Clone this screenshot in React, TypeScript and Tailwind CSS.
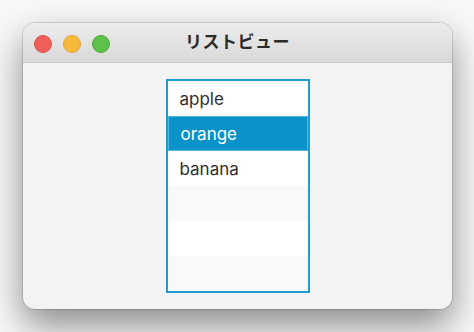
import React from "react";

const items = ["apple", "orange", "banana"];
const selected = 1;
const rowCount = 6;

function TrafficLights() {
  return (
    <div className="absolute left-[11px] top-[12px] flex items-center gap-[11px]">
      <span className="block h-[18px] w-[18px] rounded-full bg-[#ee5f58] border border-[#d9534c]" />
      <span className="block h-[18px] w-[18px] rounded-full bg-[#f8b93a] border border-[#e0a530]" />
      <span className="block h-[18px] w-[18px] rounded-full bg-[#5dc04a] border border-[#4ea83d]" />
    </div>
  );
}

export default function App() {
  const rows = Array.from({ length: rowCount }, (_, i) => items[i] ?? null);

  return (
    <div
      className="w-[474px] h-[332px] bg-[#f8f8f8] pt-[23px] pl-[23px] overflow-hidden"
      style={{ fontFamily: 'Inter, "Noto Sans CJK JP", sans-serif' }}
    >
      <div className="w-[429px] h-[286px] rounded-[12px] bg-[#f3f3f3] overflow-hidden flex flex-col shadow-[0_16px_36px_rgba(0,0,0,0.45),0_0_0_1px_rgba(0,0,0,0.12)]">
        {/* Title bar */}
        <div className="relative h-[40px] shrink-0 border-b border-[#c9c9c9] bg-gradient-to-b from-[#ececec] to-[#d9d9d9] flex items-center justify-center">
          <TrafficLights />
          <span className="text-[17px] font-bold text-[#2b2b2b] tracking-[0.5px]">
            リストビュー
          </span>
        </div>

        {/* Content */}
        <div className="flex-1 flex justify-center pt-[16px]">
          <div className="w-[144px] h-[214px] border-2 border-[#1d9dd2] bg-white flex flex-col">
            {rows.map((label, i) => {
              const isSel = i === selected;
              const stripe = i % 2 === 1 ? "bg-[#f9f9f9]" : "bg-white";
              return (
                <div
                  key={i}
                  className={`h-[35px] shrink-0 flex items-center pt-[2px] pl-[12px] text-[17px] ${
                    isSel
                      ? "bg-[#0a93c9] text-white border border-[#4fb6dd] pl-[11px]"
                      : `${stripe} text-[#2e2e2e]`
                  }`}
                >
                  {label}
                </div>
              );
            })}
          </div>
        </div>
      </div>
    </div>
  );
}
